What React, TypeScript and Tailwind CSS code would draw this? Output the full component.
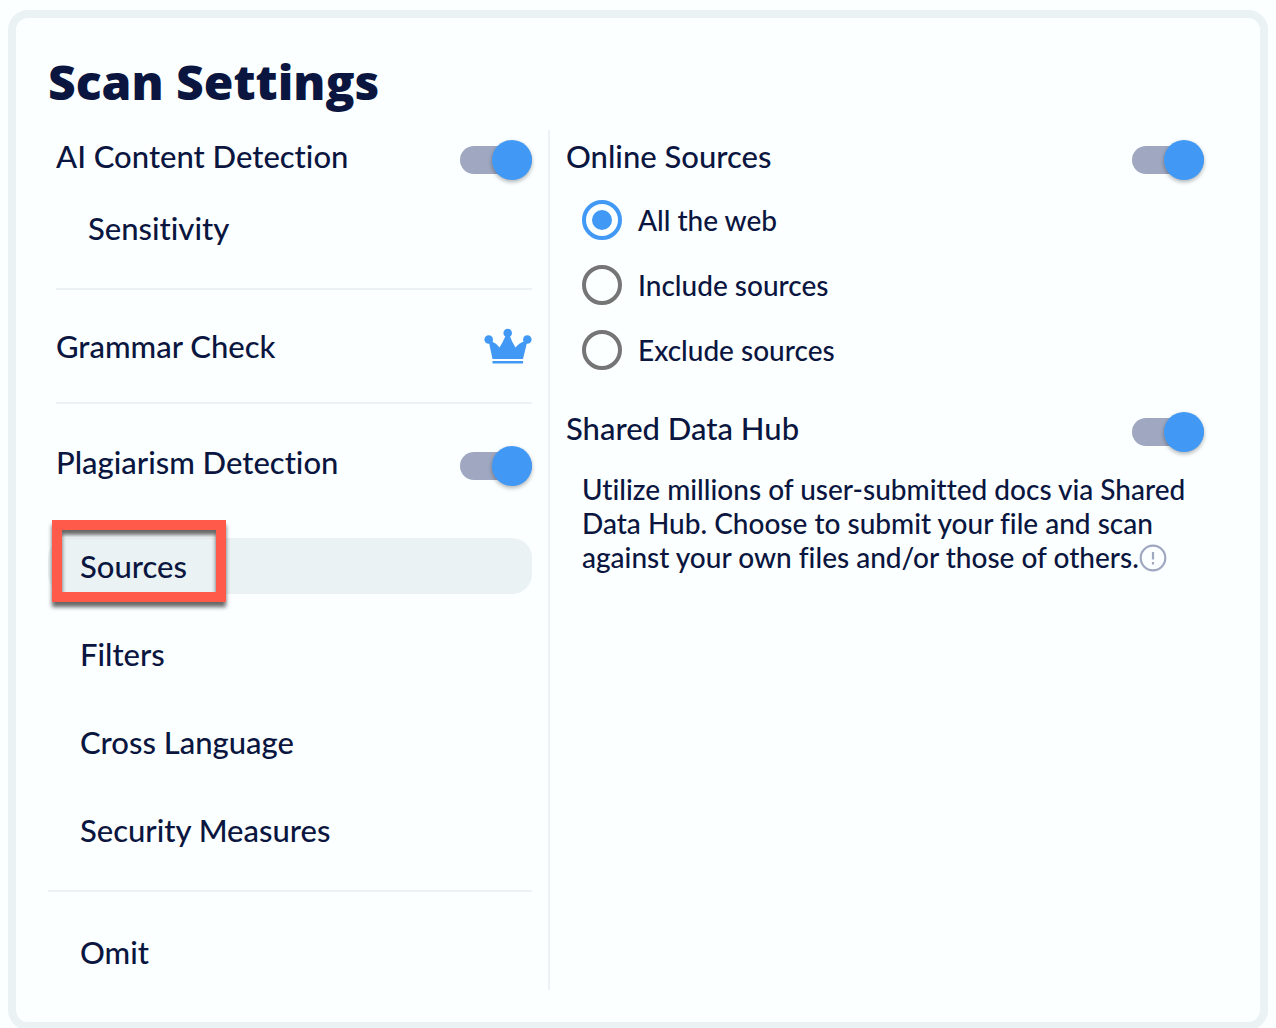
import { useState } from "react";

const plagiarismTabs = ["Sources", "Filters", "Cross Language", "Security Measures"];
const webOptions = ["All the web", "Include sources", "Exclude sources"];

function Switch({ id }: { id: string }) {
  const [on, setOn] = useState(true);

  return (
    <span className="relative flex h-10 w-[72px] shrink-0 items-center">
      <input
        id={id}
        type="checkbox"
        role="switch"
        checked={on}
        onChange={() => setOn(!on)}
        className="peer h-7 w-full appearance-none rounded-full bg-[#9fa8c0]"
      />
      <span className="pointer-events-none absolute left-0 size-10 rounded-full bg-white shadow-[0_2px_4px_rgba(0,0,0,0.3)] peer-checked:left-8 peer-checked:bg-[#4199f5]" />
    </span>
  );
}

function CrownIcon() {
  return (
    <svg width="48" height="36" viewBox="0 0 48 36" fill="#4199f5" aria-label="Premium">
      <circle cx="4.7" cy="11.500" r="4.300" />
      <circle cx="23.700" cy="5" r="4.300" />
      <circle cx="43.300" cy="11.500" r="4.300" />
      <path d="M5 14.500L8 13.500Q12 15 15.500 19.500Q19 14 21.500 8H25.800Q28 14 31.500 19.500Q35 15 40 13.500L43 14.500L39 31H8.500Z" />
      <rect x="8.500" y="33" width="30.500" height="2.500" />
    </svg>
  );
}

function InfoIcon() {
  return (
    <svg
      width="28"
      height="28"
      viewBox="0 0 28 28"
      fill="none"
      stroke="#9fa8c0"
      strokeWidth="2.2"
      className="inline-block align-[-4px]"
      aria-label="More info"
    >
      <circle cx="14" cy="14" r="12.300" />
      <path d="M14 8V15.500M14 18V20.500" />
    </svg>
  );
}

function App() {
  const [tab, setTab] = useState("Sources");
  const [web, setWeb] = useState("All the web");

  return (
    <div className="min-h-screen bg-[#fcffff] px-2 pt-[10px] font-['Lato',sans-serif] font-medium text-[#0a1640] [font-variant-ligatures:none]">
      <main className="rounded-[20px] border-8 border-[#eaf2f4] p-8">
        <h1 className="mb-4 font-['Open_Sans',sans-serif] text-[48px] leading-[64px] font-extrabold">
          Scan Settings
        </h1>
        <div className="flex text-[31px]">
          <nav className="w-[502px] shrink-0 border-r-2 border-[#eaf2f4] py-[10px] pr-4">
            <div className="pl-2">
              <div className="flex h-10 items-start justify-between leading-8">
                <label htmlFor="ai">AI Content Detection</label>
                <Switch id="ai" />
              </div>
              <button className="mt-7 ml-8 flex h-10 items-center">Sensitivity</button>
              <hr className="mt-10 border-t-2 border-[#eaf2f4]" />
              <div className="mt-9 flex h-10 items-center justify-between">
                <span>Grammar Check</span>
                <CrownIcon />
              </div>
              <hr className="mt-9 border-t-2 border-[#eaf2f4]" />
              <div className="mt-[42px] flex h-10 items-start justify-between leading-8">
                <label htmlFor="plagiarism">Plagiarism Detection</label>
                <Switch id="plagiarism" />
              </div>
            </div>
            <div className="mt-[52px] flex flex-col gap-8">
              {plagiarismTabs.map((name) => (
                <button
                  key={name}
                  onClick={() => setTab(name)}
                  className={`relative flex h-14 items-center rounded-[20px] px-8 ${tab === name ? "bg-[#eaf2f4]" : ""}`}
                >
                  {name}
                  {tab === name ? (
                    <span className="absolute -top-[18px] left-1 h-[82px] w-[174px] border-10 border-[#ff5a4a] drop-shadow-[0_5px_2px_rgba(0,0,0,0.6)]" />
                  ) : null}
                </button>
              ))}
              <hr className="border-t-2 border-[#eaf2f4]" />
              <button className="flex h-14 items-center px-8">Omit</button>
            </div>
          </nav>
          <section className="grow py-[10px] pr-6 pl-4">
            <div className="flex h-10 items-start justify-between leading-8">
              <label htmlFor="online">Online Sources</label>
              <Switch id="online" />
            </div>
            <div className="mt-5 flex flex-col gap-[25px] pl-4 text-[28px]">
              {webOptions.map((name) => (
                <label key={name} className="flex h-10 items-center gap-4">
                  <input
                    type="radio"
                    name="web"
                    checked={web === name}
                    onChange={() => setWeb(name)}
                    className="grid size-10 appearance-none place-items-center rounded-full border-4 border-[#757575] before:size-5 before:rounded-full checked:border-[#4199f5] checked:before:bg-[#4199f5]"
                  />
                  {name}
                </label>
              ))}
            </div>
            <div className="mt-[42px] flex h-10 items-start justify-between leading-8">
              <label htmlFor="hub">Shared Data Hub</label>
              <Switch id="hub" />
            </div>
            <p className="mt-5 pl-4 text-[28px] leading-[34px]">
              Utilize millions of user-submitted docs via Shared Data Hub. Choose to submit
              your file and scan against your own files and/or those of others.
              <InfoIcon />
            </p>
          </section>
        </div>
      </main>
    </div>
  );
}

export default App;
